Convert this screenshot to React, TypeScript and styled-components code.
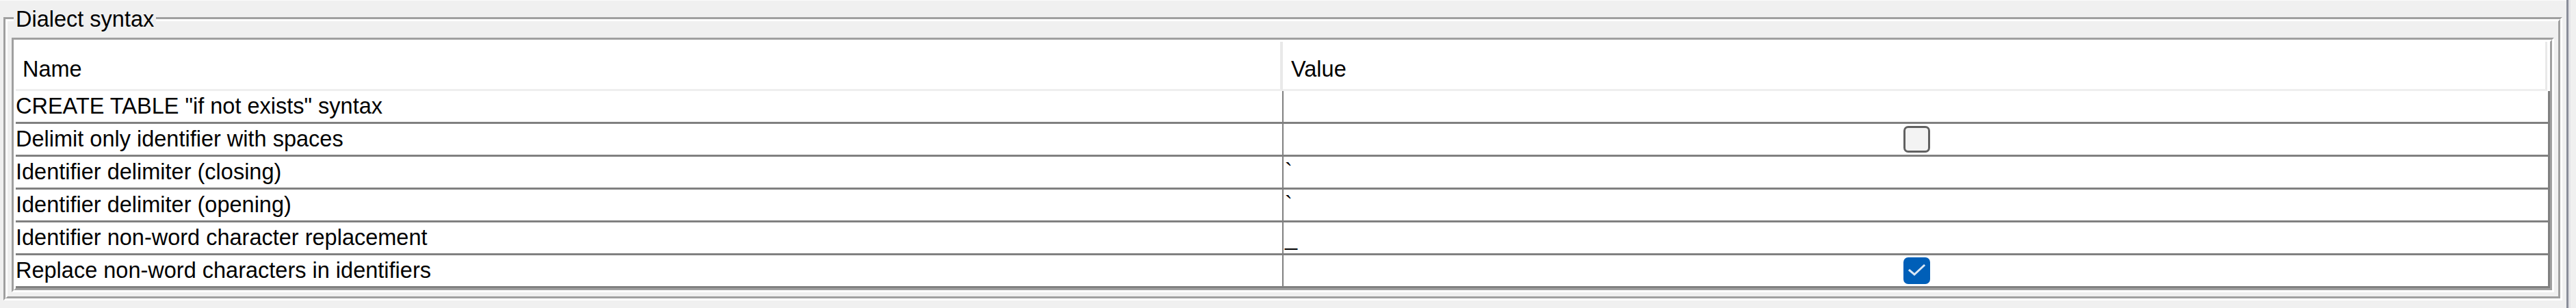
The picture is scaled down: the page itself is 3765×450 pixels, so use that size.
import React from "react";
import styled, { createGlobalStyle } from "styled-components";

const GlobalStyle = createGlobalStyle`
  html,
  body {
    margin: 0;
    padding: 0;
    background: #f0f0f0;
  }

  body {
    font-family: "Liberation Sans", Arial, sans-serif;
    font-size: 32.5px;
    color: #000;
  }
`;

const Page = styled.div`
  width: 3765px;
  height: 450px;
  display: flex;
  background: #f0f0f0;
  overflow: hidden;
`;

const Main = styled.div`
  flex: 0 0 3751px;
  display: flex;
  flex-direction: column;
  border-top: 1px solid #fbfbfb;
  box-sizing: border-box;
`;

const Splitter = styled.div`
  flex: 0 0 3px;
  background: #898d99;
  border-right: 3px solid #e2e2e6;
`;

// etched group box: grey line with a white line next to it
const GroupOuter = styled.div`
  position: relative;
  margin: 24px 6px 8px 5px;
  border: 3px solid;
  border-color: #a0a0a0 #fff #fff #a0a0a0;
`;

const GroupInner = styled.div`
  border: 3px solid;
  border-color: #fff #a0a0a0 #a0a0a0 #fff;
  padding: 24px 6px 6px 6px;
`;

const Caption = styled.span`
  position: absolute;
  top: -19px;
  left: 12px;
  padding: 0 3px;
  line-height: 38px;
  background: #f0f0f0;
  white-space: nowrap;
`;

const GridFrame = styled.div`
  border: 3px solid;
  border-color: #a0a0a0 #fff #fff #a0a0a0;
`;

const GridInner = styled.div`
  border: 3px solid;
  border-color: #fff #a0a0a0 #a0a0a0 #fff;
  background: #fff;
`;

const HeaderRow = styled.div`
  display: grid;
  grid-template-columns: 1852px 1848px 1fr;
`;

const HeaderCell = styled.div`
  height: 72px;
  padding: 8px 0 0 ${({ $indent }: { $indent: number }) => $indent}px;
  box-sizing: border-box;
  line-height: 64px;
  border-right: 4px solid #e9e9e9;
  border-bottom: 3px solid #efefef;
  white-space: nowrap;

  &:nth-child(2) {
    border-right-width: 3px;
  }
`;

const HeaderFiller = styled.div`
  border-bottom: 3px solid #fff;
`;

const Row = styled.div`
  display: grid;
  grid-template-columns: 1853px 1851px;
  height: 48px;
  border-bottom: 3px solid #808080;
  box-sizing: border-box;
`;

const NameCell = styled.div`
  line-height: 45px;
  border-right: 2px solid #808080;
  white-space: nowrap;
  overflow: hidden;
`;

const ValueCell = styled.div<{ $center?: boolean }>`
  display: flex;
  align-items: center;
  justify-content: ${({ $center }) => ($center ? "center" : "flex-start")};
  padding-left: ${({ $center }) => ($center ? "0" : "2px")};
  line-height: 45px;
  border-right: 3px solid #808080;
  white-space: pre;
`;

const Box = styled.span<{ $checked: boolean }>`
  width: 39px;
  height: 39px;
  box-sizing: border-box;
  border-radius: 7px;
  border: 3px solid ${({ $checked }) => ($checked ? "#005fb8" : "#616161")};
  background: ${({ $checked }) => ($checked ? "#005fb8" : "#f3f3f3")};
  display: flex;
  align-items: center;
  justify-content: center;
  margin-left: 3px;

  svg {
    display: block;
  }
`;

const CheckBox = ({ checked }: { checked: boolean }) => (
  <Box $checked={checked}>
    {checked && (
      <svg width="39" height="39" viewBox="0 0 39 39" style={{ margin: -3 }}>
        <polyline
          points="9,19 16,25 30,12"
          fill="none"
          stroke="#dbe8f5"
          strokeWidth="3"
          strokeLinecap="square"
        />
      </svg>
    )}
  </Box>
);

type Setting = {
  name: string;
  value?: string;
  checked?: boolean;
};

const settings: Setting[] = [
  { name: 'CREATE TABLE "if not exists" syntax', value: "" },
  { name: "Delimit only identifier with spaces", checked: false },
  { name: "Identifier delimiter (closing)", value: "`" },
  { name: "Identifier delimiter (opening)", value: "`" },
  { name: "Identifier non-word character replacement", value: "_" },
  { name: "Replace non-word characters in identifiers", checked: true },
];

const App = () => (
  <>
    <GlobalStyle />
    <Page>
      <Main>
        <GroupOuter>
          <Caption>Dialect syntax</Caption>
          <GroupInner>
            <GridFrame>
              <GridInner>
                <HeaderRow>
                  <HeaderCell $indent={10}>Name</HeaderCell>
                  <HeaderCell $indent={12}>Value</HeaderCell>
                  <HeaderFiller />
                </HeaderRow>
                {settings.map((s) => (
                  <Row key={s.name}>
                    <NameCell>{s.name}</NameCell>
                    {s.checked === undefined ? (
                      <ValueCell>{s.value}</ValueCell>
                    ) : (
                      <ValueCell $center>
                        <CheckBox checked={s.checked} />
                      </ValueCell>
                    )}
                  </Row>
                ))}
              </GridInner>
            </GridFrame>
          </GroupInner>
        </GroupOuter>
      </Main>
      <Splitter />
    </Page>
  </>
);

export default App;
